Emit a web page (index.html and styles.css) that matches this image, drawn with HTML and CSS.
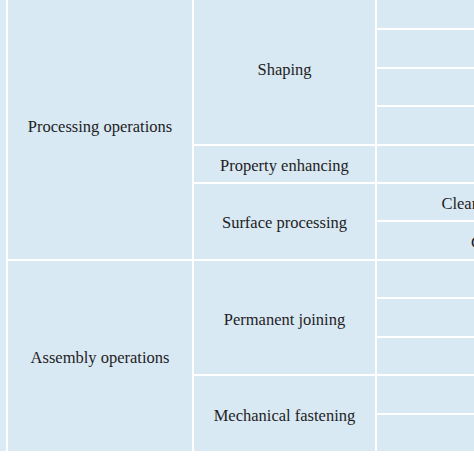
FILE: index.html
```html
<!DOCTYPE html>
<html lang="en">
<head>
<meta charset="utf-8">
<title>Manufacturing operations</title>
<link rel="stylesheet" href="styles.css">
</head>
<body>
<div class="table">
  <div class="cell strip"></div>

  <div class="cell c1 r-proc">Processing operations</div>
  <div class="cell c1 r-asm">Assembly operations</div>

  <div class="cell c2 r-shaping">Shaping</div>
  <div class="cell c2 r-property">Property enhancing</div>
  <div class="cell c2 r-surface">Surface processing</div>
  <div class="cell c2 r-permanent">Permanent joining</div>
  <div class="cell c2 r-mechanical">Mechanical fastening</div>

  <div class="cell c3">Solidification</div>
  <div class="cell c3">Particulate</div>
  <div class="cell c3">Deformation</div>
  <div class="cell c3">Material removal</div>
  <div class="cell c3">Heat treatment</div>
  <div class="cell c3">Cleaning and surface treatments</div>
  <div class="cell c3">Coating and deposition</div>
  <div class="cell c3">Welding</div>
  <div class="cell c3">Brazing, soldering</div>
  <div class="cell c3">Adhesive bonding</div>
  <div class="cell c3">Threaded fasteners</div>
  <div class="cell c3">Rivets, press fits</div>
</div>
</body>
</html>
```

FILE: styles.css
```css
html, body {
  margin: 0;
  padding: 0;
  background: #ffffff;
  overflow: hidden;
  width: 474px;
  height: 474px;
}

.table {
  display: grid;
  grid-template-columns: 6px 184px 181px 341px;
  grid-template-rows: repeat(12, 36.45px);
  gap: 2px;
  width: max-content;
  margin-top: -8.15px;
  background: #ffffff;
  font-family: "Liberation Serif", "Times New Roman", serif;
  font-size: 16.5px;
  color: #1f1d1e;
}

.cell {
  background: #d8e9f4;
  display: flex;
  align-items: center;
  justify-content: center;
  text-align: center;
  white-space: nowrap;
  padding-top: 4px;
  box-sizing: border-box;
}

.strip {
  grid-column: 1;
  grid-row: 1 / span 12;
  background: #dbebf5;
}

.c1 { grid-column: 2; }
.c2 { grid-column: 3; }
.c3 { grid-column: 4; }

.r-proc { grid-row: 1 / span 7; }
.r-asm { grid-row: 8 / span 5; }

.r-shaping { grid-row: 1 / span 4; }
.r-property { grid-row: 5 / span 1; }
.r-surface { grid-row: 6 / span 2; }
.r-permanent { grid-row: 8 / span 3; }
.r-mechanical { grid-row: 11 / span 2; }
```
